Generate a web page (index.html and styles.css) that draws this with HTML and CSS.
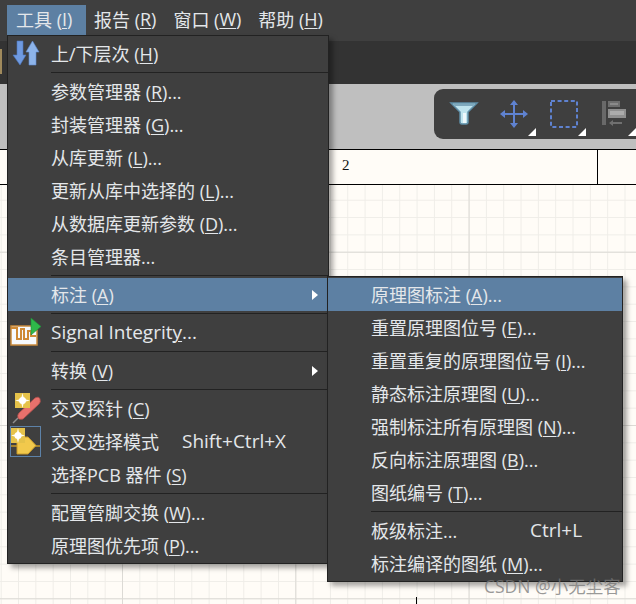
FILE: index.html
```html
<!DOCTYPE html>
<html lang="zh-CN">
<head>
<meta charset="utf-8">
<title>工具菜单</title>
<link rel="stylesheet" href="styles.css">
</head>
<body>
<div class="app">
  <nav class="menubar">
    <span class="top active">工具 (<u>I</u>)</span>
    <span class="top">报告 (<u>R</u>)</span>
    <span class="top">窗口 (<u>W</u>)</span>
    <span class="top">帮助 (<u>H</u>)</span>
  </nav>
  <div class="darkbar"><span class="sliver"></span></div>
  <div class="greybar">
    <div class="pill">
      <span class="tool">
        <svg width="30" height="30" viewBox="0 0 30 30"><path d="M2 4H28L19 13V23Q19 25 17 25H13Q11 25 11 23V13Z" fill="#bfe4ee" stroke="#5f8fa8" stroke-width="1.500"/><path d="M4 5H26L24 7H6Z" fill="#7fa9bd"/><path d="M14 14H17V24H14Z" fill="#eef8fb"/></svg>
      </span>
      <span class="tool corner">
        <svg width="30" height="30" viewBox="0 0 30 30" fill="#5f82d0"><path d="M14 5H16V14H25V16H16V25H14V16H5V14H14Z"/><path d="M15 1L19 6H11ZM15 29L19 24H11ZM1 15L6 11V19ZM29 15L24 11V19Z"/></svg>
      </span>
      <span class="tool corner">
        <svg width="30" height="30" viewBox="0 0 30 30"><rect x="2" y="2" width="26" height="26" fill="none" stroke="#5f82d0" stroke-width="2" stroke-dasharray="4 2.600"/></svg>
      </span>
      <span class="tool corner">
        <svg width="30" height="30" viewBox="0 0 30 30"><rect x="3" y="2" width="4" height="24" fill="#696969"/><rect x="9" y="2" width="12" height="6" fill="#6e6e6e"/><rect x="11" y="4" width="8" height="2" fill="#8a8a8a"/><rect x="9" y="10" width="18" height="9" fill="#8f8f8f"/><rect x="11" y="12" width="14" height="4" fill="#ababab"/><path d="M10 24L14 21V23H23V25H14V27Z" fill="#707070"/></svg>
      </span>
    </div>
  </div>
  <div class="ruler">
    <span class="zone first">2</span>
    <span class="zone"></span>
  </div>
  <div class="canvas"></div>
</div>
<div class="tick"></div>

<div class="menu main">
  <div class="item">
    <span class="icon">
      <svg width="32" height="33" viewBox="0 0 32 33"><path d="M7 4H13V18H16L10 28L3 18H7Z" fill="#6f9ae0" stroke="#4a76bf" stroke-width=".6"/><path d="M22.500 4L29 15H26V28H19V15H16Z" fill="#8db4ea" stroke="#5f8ad0" stroke-width=".6"/></svg>
    </span>
    <span class="label">上/下层次 (<u>H</u>)</span>
  </div>
  <div class="sep"></div>
  <div class="item"><span class="icon"></span><span class="label">参数管理器 (<u>R</u>)...</span></div>
  <div class="item"><span class="icon"></span><span class="label">封装管理器 (<u>G</u>)...</span></div>
  <div class="item"><span class="icon"></span><span class="label">从库更新 (<u>L</u>)...</span></div>
  <div class="item"><span class="icon"></span><span class="label">更新从库中选择的 (<u>L</u>)...</span></div>
  <div class="item"><span class="icon"></span><span class="label">从数据库更新参数 (<u>D</u>)...</span></div>
  <div class="item"><span class="icon"></span><span class="label">条目管理器...</span></div>
  <div class="sep"></div>
  <div class="item selected"><span class="icon"></span><span class="label">标注 (<u>A</u>)</span><span class="arrow"></span></div>
  <div class="sep"></div>
  <div class="item">
    <span class="icon">
      <svg width="32" height="33" viewBox="0 0 32 33"><rect x="1" y="10" width="26" height="19" fill="#f6f9fd" stroke="#c98a3c" stroke-width="1.500"/><path d="M1 12H7V23H11V13H14V23H18V15H21V20H26" fill="none" stroke="#cf8a35" stroke-width="2"/><path d="M21 2L31 10.500L21 19Z" fill="#2fb84a" stroke="#1d8f36" stroke-width=".6"/></svg>
    </span>
    <span class="label latin">Signal Integrit<u>y</u>...</span>
  </div>
  <div class="sep"></div>
  <div class="item"><span class="icon"></span><span class="label">转换 (<u>V</u>)</span><span class="arrow"></span></div>
  <div class="sep"></div>
  <div class="item">
    <span class="icon">
      <svg width="32" height="33" viewBox="0 0 32 33"><path d="M8 26L3 31" stroke="#8f8f8f" stroke-width="1.500"/><path d="M25 6Q29 4 30 7Q31 10 29 12L13 27Q9 28 8 26Q7 23 9 21Z" fill="#e8716c" stroke="#b9504c" stroke-width=".8"/><rect x="5" y="1" width="15" height="15" fill="#e5c24a"/><path d="M12.500 1L14 7L20 8.500L14 10L12.500 16L11 10L5 8.500L11 7Z" fill="#fffdf0"/><circle cx="12.500" cy="8.500" r="3.500" fill="#fff"/></svg>
    </span>
    <span class="label">交叉探针 (<u>C</u>)</span>
  </div>
  <div class="item">
    <span class="icon">
      <svg width="32" height="33" viewBox="0 0 32 33"><rect x=".5" y="1.500" width="30" height="30" fill="none" stroke="#5d82a8"/><path d="M1 21H30" stroke="#c79a2a" stroke-width="1.500"/><path d="M7 12H18L26 20.500L18 29H7Z" fill="#f2c94c" stroke="#c89a28"/><rect x="1" y="3" width="14" height="15" fill="#e5c24a"/><path d="M8 3L9.500 9L15 10.500L9.500 12L8 18L6.500 12L1 10.500L6.500 9Z" fill="#fffdf0"/><circle cx="8" cy="10.500" r="3.500" fill="#fff"/></svg>
    </span>
    <span class="label wide">交叉选择模式</span><span class="key">Shift+Ctrl+X</span>
  </div>
  <div class="item"><span class="icon"></span><span class="label">选择PCB 器件 (<u>S</u>)</span></div>
  <div class="sep"></div>
  <div class="item"><span class="icon"></span><span class="label">配置管脚交换 (<u>W</u>)...</span></div>
  <div class="item"><span class="icon"></span><span class="label">原理图优先项 (<u>P</u>)...</span></div>
</div>

<div class="menu sub">
  <div class="item selected"><span class="icon"></span><span class="label">原理图标注 (<u>A</u>)...</span></div>
  <div class="item"><span class="icon"></span><span class="label">重置原理图位号 (<u>E</u>)...</span></div>
  <div class="item"><span class="icon"></span><span class="label">重置重复的原理图位号 (<u>I</u>)...</span></div>
  <div class="item"><span class="icon"></span><span class="label">静态标注原理图 (<u>U</u>)...</span></div>
  <div class="item"><span class="icon"></span><span class="label">强制标注所有原理图 (<u>N</u>)...</span></div>
  <div class="item"><span class="icon"></span><span class="label">反向标注原理图 (<u>B</u>)...</span></div>
  <div class="item"><span class="icon"></span><span class="label">图纸编号 (<u>T</u>)...</span></div>
  <div class="sep"></div>
  <div class="item"><span class="icon"></span><span class="label wider">板级标注...</span><span class="key">Ctrl+L</span></div>
  <div class="item"><span class="icon"></span><span class="label">标注编译的图纸 (<u>M</u>)...</span></div>
</div>

<div class="watermark">CSDN @小无尘客</div>
</body>
</html>
```

FILE: styles.css
```css
* {
  box-sizing: border-box;
}

html,
body {
  margin: 0;
  padding: 0;
  height: 100%;
  overflow: hidden;
}

body {
  position: relative;
  font-family: "Open Sans", "Noto Sans CJK SC", sans-serif;
  font-size: 18px;
  color: #e4e7ea;
  background: #fffcf7;
}

u {
  text-underline-offset: 2px;
  text-decoration-thickness: 1px;
}

.app {
  display: flex;
  flex-direction: column;
  height: 100%;
}

.menubar {
  display: flex;
  height: 41px;
  padding: 5px 0 6px 7px;
  background: #3f3f3f;
}

.top {
  display: flex;
  align-items: center;
  height: 30px;
  padding: 0 9px 2px 8px;
  white-space: pre;
}

.top.active {
  width: 79px;
  padding-left: 9px;
  background: #5d80a3;
}

.darkbar {
  height: 43px;
  padding-top: 8px;
  background: #333333;
}

.sliver {
  display: block;
  width: 2px;
  height: 25px;
  background: #a08a5c;
}

.greybar {
  display: flex;
  justify-content: flex-end;
  height: 65px;
  padding: 5px 0 10px;
  background: #bfbfbf;
}

.pill {
  display: flex;
  align-items: center;
  gap: 20px;
  width: 202px;
  padding: 0 0 0 15px;
  border-radius: 9px 0 0 9px;
  background: #3f3f3f;
}

.tool {
  position: relative;
  display: flex;
  width: 30px;
  height: 30px;
}

.corner::after {
  content: "";
  position: absolute;
  right: -7px;
  bottom: -7px;
  border-style: solid;
  border-width: 0 0 8px 8px;
  border-color: transparent transparent #ffffff transparent;
}

.ruler {
  display: flex;
  height: 36px;
  background: #fffcf7;
  border-top: 1px solid #000000;
  border-bottom: 1px solid #000000;
  font-family: "Liberation Serif", serif;
  font-size: 15px;
  color: #111111;
}

.zone {
  flex: 1;
}

.zone.first {
  flex: 0 0 598px;
  padding: 7px 0 0 342px;
  border-right: 1px solid #000000;
}

.canvas {
  flex: 1;
  background-color: #fffcf7;
  background-image:
    linear-gradient(90deg, #dcdad5 1px, transparent 1px),
    linear-gradient(0deg, #dcdad5 1px, transparent 1px),
    linear-gradient(90deg, #efede8 1px, transparent 1px),
    linear-gradient(0deg, #efede8 1px, transparent 1px);
  background-size: 173.300px 173.300px, 173.300px 173.300px, 17.330px 17.330px, 17.330px 17.330px;
  background-position: 122px 67.700px, 122px 67.700px, 122px 67.700px, 122px 67.700px;
}

.tick {
  position: absolute;
  left: 416px;
  top: 597px;
  width: 1px;
  height: 7px;
  background: #000000;
}

.menu {
  position: absolute;
  padding: 1px 0;
  background: #3f3f3f;
  border: 1px solid #222222;
  box-shadow: 4px 4px 5px rgba(0, 0, 0, 0.35);
}

.main {
  left: 7px;
  top: 35px;
  width: 322px;
  height: 529px;
}

.sub {
  left: 327px;
  top: 276px;
  width: 296px;
  height: 306px;
}

.item {
  display: flex;
  align-items: center;
  height: 33px;
  white-space: nowrap;
}

.item.selected {
  background: #5d80a3;
}

.icon {
  display: flex;
  flex: 0 0 43px;
  height: 33px;
  padding-left: 2px;
}

.label {
  padding-bottom: 2px;
}

.label.latin {
  font-size: 19px;
}

.label.wide {
  width: 131px;
}

.label.wider {
  width: 159px;
}

.key {
  padding-bottom: 2px;
  font-size: 19px;
}

.arrow {
  margin-left: auto;
  margin-right: 10px;
  border-style: solid;
  border-width: 5px 0 5px 6px;
  border-color: transparent transparent transparent #ffffff;
}

.sep {
  position: relative;
  height: 5px;
  margin-left: 43px;
}

.sep::after {
  content: "";
  position: absolute;
  left: 0;
  right: 0;
  top: 2px;
  height: 1px;
  background: #222222;
}

.watermark {
  position: absolute;
  left: 484px;
  top: 573px;
  font-size: 17.500px;
  color: rgba(120, 120, 120, 0.75);
  white-space: nowrap;
}
```
